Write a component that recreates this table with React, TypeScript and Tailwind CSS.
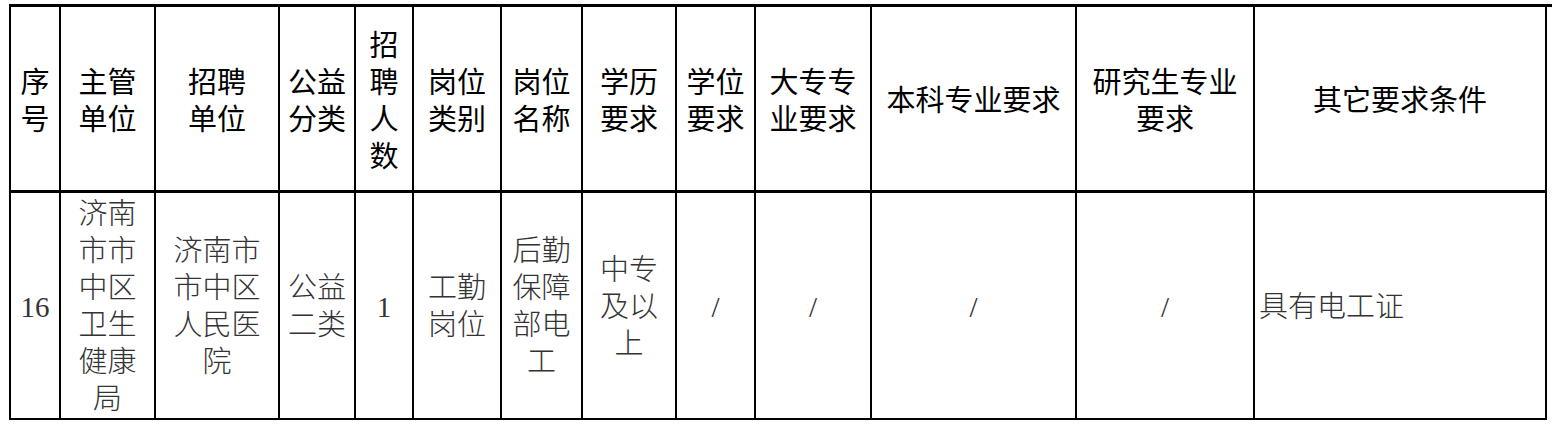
import React from 'react';

const headers: { lines: string[]; width: number }[] = [
  { lines: ['序', '号'], width: 50 },
  { lines: ['主管', '单位'], width: 95 },
  { lines: ['招聘', '单位'], width: 124 },
  { lines: ['公益', '分类'], width: 76 },
  { lines: ['招', '聘', '人', '数'], width: 58 },
  { lines: ['岗位', '类别'], width: 88 },
  { lines: ['岗位', '名称'], width: 81 },
  { lines: ['学历', '要求'], width: 94 },
  { lines: ['学位', '要求'], width: 79 },
  { lines: ['大专专', '业要求'], width: 116 },
  { lines: ['本科专业要求'], width: 205 },
  { lines: ['研究生专业', '要求'], width: 178 },
  { lines: ['其它要求条件'], width: 292 },
];

const row: { lines: string[]; align?: 'left' }[] = [
  { lines: ['16'] },
  { lines: ['济南', '市市', '中区', '卫生', '健康', '局'] },
  { lines: ['济南市', '市中区', '人民医', '院'] },
  { lines: ['公益', '二类'] },
  { lines: ['1'] },
  { lines: ['工勤', '岗位'] },
  { lines: ['后勤', '保障', '部电', '工'] },
  { lines: ['中专', '及以', '上'] },
  { lines: ['/'] },
  { lines: ['/'] },
  { lines: ['/'] },
  { lines: ['/'] },
  { lines: ['具有电工证'], align: 'left' },
];

const Lines = ({ lines }: { lines: string[] }) => (
  <>
    {lines.map((l, i) => (
      <div key={i} className="whitespace-nowrap">
        {l}
      </div>
    ))}
  </>
);

export default function App() {
  return (
    <div className="w-[1552px] h-[440px] overflow-hidden bg-white">
      <table className="ml-[9px] mt-[4px] table-fixed border-collapse w-[1640px]">
        <colgroup>
          {headers.map((h, i) => (
            <col key={i} style={{ width: h.width }} />
          ))}
          <col className="w-[104px]" />
        </colgroup>
        <thead>
          <tr className="h-[186px]">
            {headers.map((h, i) => (
              <th
                key={i}
                className="border-2 border-t-[3px] border-b-[3px] border-black p-0 align-middle text-center font-normal text-[29px] leading-[37px] text-black font-['Noto_Sans_CJK_SC',sans-serif]"
              >
                <Lines lines={h.lines} />
              </th>
            ))}
            <th className="border-l-2 border-t-[3px] border-black p-0" />
          </tr>
        </thead>
        <tbody>
          <tr className="h-[226px]">
            {row.map((c, i) => (
              <td
                key={i}
                className={`border-2 border-black p-0 pt-[3px] align-middle text-[29px] leading-[37px] text-[#333333] font-light font-['Liberation_Serif','Noto_Sans_CJK_SC',serif] ${
                  c.align === 'left' ? 'text-left pl-[4px]' : 'text-center'
                }`}
              >
                <Lines lines={c.lines} />
              </td>
            ))}
            <td className="border-l-2 border-black p-0" />
          </tr>
        </tbody>
      </table>
    </div>
  );
}
